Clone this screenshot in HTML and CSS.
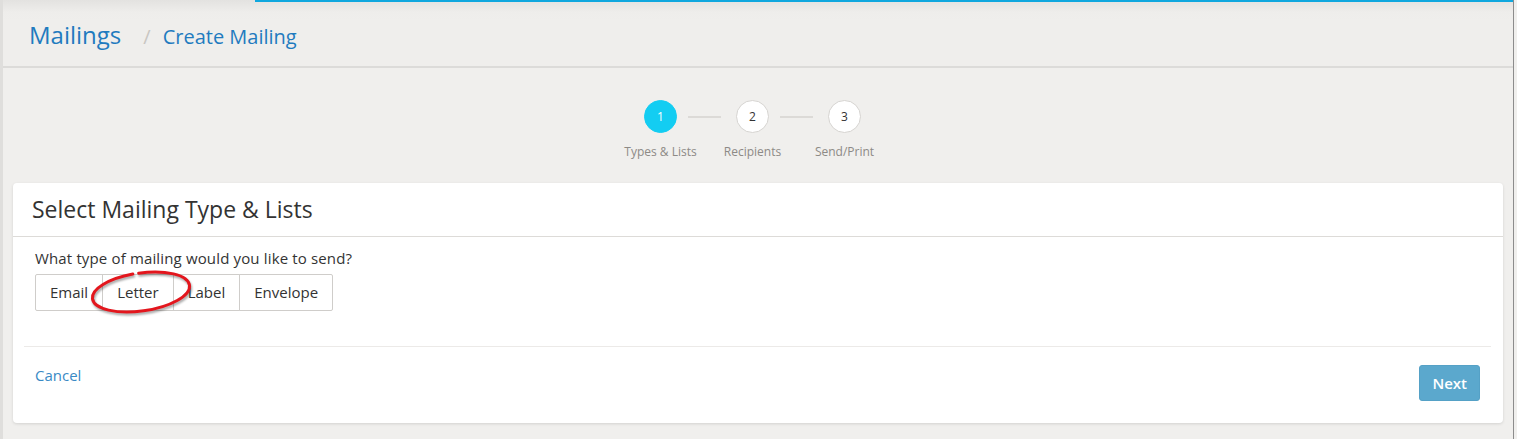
FILE: index.html
```html
<!DOCTYPE html>
<html lang="en">
<head>
<meta charset="utf-8">
<title>Create Mailing</title>
<link rel="stylesheet" href="styles.css">
</head>
<body>
<div class="page">
  <header class="topbar">
    <div class="loadbar"></div>
    <div class="crumbs">
      <a class="crumb-root" href="#">Mailings</a>
      <span class="crumb-sep">/</span>
      <a class="crumb-current" href="#">Create Mailing</a>
    </div>
  </header>

  <section class="steps">
    <div class="step-dots">
      <span class="dot active">1</span>
      <span class="bar"></span>
      <span class="dot">2</span>
      <span class="bar"></span>
      <span class="dot">3</span>
    </div>
    <div class="step-labels">
      <span>Types &amp; Lists</span>
      <span>Recipients</span>
      <span>Send/Print</span>
    </div>
  </section>

  <section class="card">
    <div class="card-head">
      <h1 class="card-title">Select Mailing Type &amp; Lists</h1>
    </div>
    <div class="card-main">
      <div class="section">
        <p class="question">What type of mailing would you like to send?</p>
        <div class="btn-group">
          <button class="btn">Email</button>
          <button class="btn">Letter</button>
          <button class="btn">Label</button>
          <button class="btn">Envelope</button>
          <svg class="scribble" width="112" height="56" viewBox="0 0 112 56">
            <ellipse cx="55" cy="28" rx="49" ry="19" transform="rotate(-8 55 28)" fill="none" stroke="#e3161d" stroke-width="3" stroke-dasharray="162 6 220" stroke-linecap="round"/>
          </svg>
        </div>
      </div>
      <div class="divider"></div>
      <div class="section footer">
        <a class="cancel" href="#">Cancel</a>
        <button class="btn-next">Next</button>
      </div>
    </div>
  </section>
</div>
</body>
</html>
```

FILE: styles.css
```css
* { box-sizing: border-box; }

html, body {
  margin: 0;
  padding: 0;
  background: #f0efed;
  font-family: "Open Sans", "Noto Sans", "Liberation Sans", sans-serif;
  color: #333;
}

.page {
  height: 439px;
  margin-right: 3px;
  border-left: 3px solid #dfdedc;
  border-right: 1px solid #8c8c8c;
  background: #f0efed;
  overflow: hidden;
}

.topbar {
  height: 68px;
  border-bottom: 2px solid #dcdbd9;
  background: linear-gradient(to bottom, #e3e2e0 0px, #eeedeb 12px, #efeeec 20px, #efeeec 100%);
}

.loadbar {
  height: 2px;
  margin-left: 252px;
  background: #0fa7de;
}

.crumbs {
  display: flex;
  align-items: baseline;
  padding: 17px 0 0 26px;
}

.crumb-root {
  font-size: 24px;
  line-height: 32px;
  color: #1f7bbf;
  text-decoration: none;
}

.crumb-sep {
  font-size: 20px;
  color: #c9c6c2;
  margin: 0 12px 0 22px;
}

.crumb-current {
  font-size: 20px;
  color: #1f7bbf;
  text-decoration: none;
}

.steps {
  padding: 32px 11px 0 0;
  display: flex;
  flex-direction: column;
  align-items: center;
}

.step-dots {
  display: flex;
  align-items: center;
}

.dot {
  width: 33px;
  height: 33px;
  border-radius: 50%;
  background: #fff;
  border: 1px solid #d6d4d1;
  color: #333;
  font-size: 12px;
  display: flex;
  align-items: center;
  justify-content: center;
}

.dot.active {
  background: #13cdf2;
  border-color: #13cdf2;
  color: #fff;
}

.bar {
  width: 33px;
  height: 2px;
  background: #dcdad7;
  margin: 0 15px 0 11px;
}

.step-labels {
  display: grid;
  grid-template-columns: repeat(3, 92px);
  margin-top: 10px;
  font-size: 12px;
  line-height: 18px;
  color: #8d8a86;
  text-align: center;
}

.card {
  margin: 22px 10px 0 10px;
  background: #fff;
  border-radius: 4px;
  box-shadow: 0 1px 3px rgba(0, 0, 0, 0.12);
}

.card-head {
  padding: 11px 20px 12px 19px;
  border-bottom: 1px solid #dddbd8;
}

.card-title {
  margin: 0;
  font-size: 23px;
  line-height: 30px;
  font-weight: 400;
  color: #333;
}

.card-main {
  padding: 0 12px 22px 11px;
}

.section {
  padding: 0 11px;
}

.question {
  margin: 0;
  padding-top: 11px;
  font-size: 15px;
  letter-spacing: 0.15px;
  line-height: 20px;
  color: #333;
}

.btn-group {
  position: relative;
  display: flex;
  margin-top: 6px;
  margin-bottom: 35px;
}

.btn {
  font-family: inherit;
  font-size: 15px;
  line-height: 21px;
  padding: 7px 14px;
  background: #fff;
  color: #333;
  border: 1px solid #cfcdca;
  margin-left: -1px;
  border-radius: 0;
  cursor: pointer;
}

.btn:first-child {
  margin-left: 0;
  border-radius: 2px 0 0 2px;
}

.btn:nth-child(4) {
  border-radius: 0 2px 2px 0;
}

.scribble {
  position: absolute;
  left: 51px;
  top: -10px;
  filter: drop-shadow(1px 2px 1px rgba(0, 0, 0, 0.35));
  pointer-events: none;
}

.divider {
  height: 1px;
  background: #eceae8;
}

.footer {
  display: flex;
  justify-content: space-between;
  align-items: flex-start;
  padding-top: 18px;
}

.cancel {
  font-size: 15px;
  line-height: 20px;
  color: #3a8ac5;
  text-decoration: none;
}

.btn-next {
  font-family: inherit;
  font-size: 15px;
  font-weight: 600;
  line-height: 20px;
  padding: 7px 12px;
  height: 36px;
  background: #5ba8cd;
  color: #fff;
  border: 1px solid #55a1c6;
  border-radius: 3px;
}
```
